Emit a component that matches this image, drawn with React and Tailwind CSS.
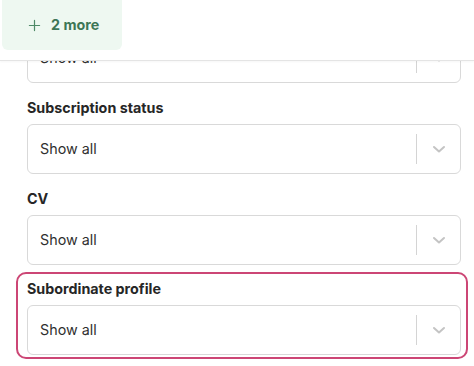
import React from "react";

function ChevronDown() {
  return (
    <svg width="16" height="16" viewBox="0 0 16 16" fill="none" stroke="#c4c4c4" strokeWidth="2" strokeLinecap="round" strokeLinejoin="round">
      <path d="M3 6l5 4.5L13 6" />
    </svg>
  );
}

function SelectBox({ value = "Show all" }) {
  return (
    <div className="h-[50px] flex items-center rounded-[6px] border border-[#d9d9d9] bg-white">
      <span className="flex-1 pl-[12px] text-[14.3px] text-[#2f2f2f]">{value}</span>
      <div className="h-[30px] w-px bg-[#d4d4d4]" />
      <div className="w-[43px] flex items-center justify-center">
        <ChevronDown />
      </div>
    </div>
  );
}

function Field({ label }) {
  return (
    <div className="flex flex-col gap-[6px]">
      <div className="h-[20px] leading-[20px] text-[14.3px] font-bold text-[#262626]">{label}</div>
      <SelectBox />
    </div>
  );
}

export default function App() {
  return (
    <div
      className="relative h-[366px] w-[474px] overflow-hidden bg-white"
      style={{ fontFamily: "Inter, 'Liberation Sans', sans-serif" }}
    >
      <div className="absolute inset-x-0 top-0 z-10 h-[61px] bg-white border-b border-[#e4e4e4] shadow-[0_1px_2px_rgba(0,0,0,0.04)]">
        <div className="ml-[2px] h-[50px] w-[120px] rounded-b-[6px] bg-[#eef8f1] flex items-center pl-[26px] gap-[10px]">
          <svg width="13" height="13" viewBox="0 0 14 14" fill="none" stroke="#4f8a68" strokeWidth="1.3" strokeLinecap="round">
            <path d="M7 1.5v11M1.5 7h11" />
          </svg>
          <span className="text-[14.3px] font-bold text-[#3d7656]">2 more</span>
        </div>
      </div>

      <div className="pt-[33px] pl-[27px] pr-[13px]">
        <SelectBox />
        <div className="mt-[15px] flex flex-col gap-[15px]">
          <Field label="Subscription status" />
          <Field label="CV" />
        </div>
        <div className="mt-[7px] -ml-[11px] -mr-[7px] rounded-[10px] border-2 border-[#cc4675] pt-[5px] pb-[2px] pl-[9px] pr-[5px]">
          <Field label="Subordinate profile" />
        </div>
      </div>
    </div>
  );
}
